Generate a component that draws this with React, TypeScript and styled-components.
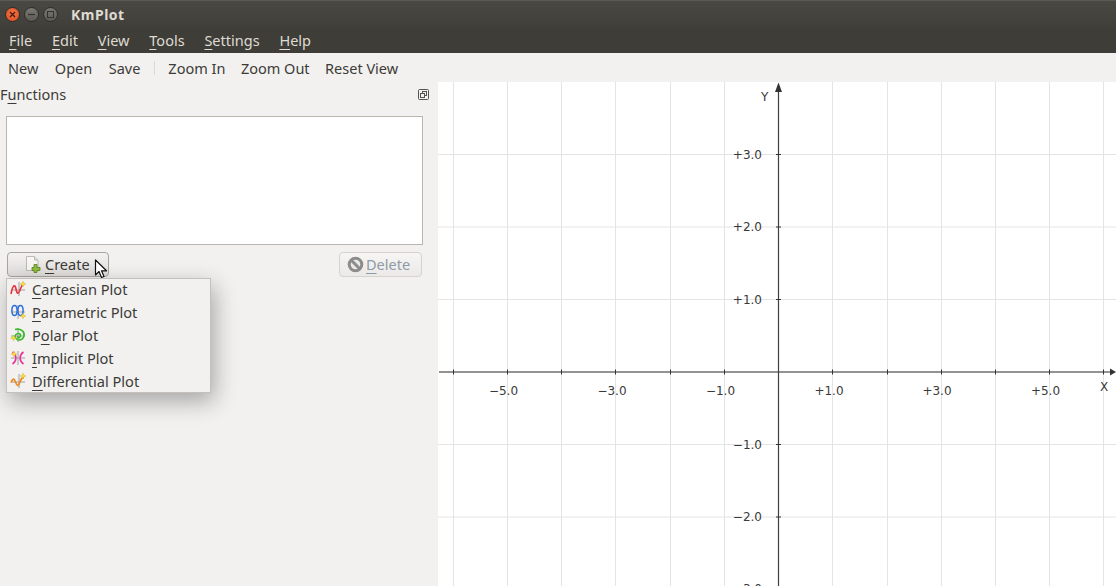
import React from "react";
import styled, { createGlobalStyle } from "styled-components";

const Global = createGlobalStyle`
  html, body { margin: 0; padding: 0; width: 1116px; height: 586px; overflow: hidden; background: #f2f1f0; }
  body { font-family: "Noto Sans", "Open Sans", sans-serif; font-size: 14px; color: #3c3b37; }
`;

const Window = styled.div`
  position: relative;
  width: 1116px;
  height: 586px;
  display: flex;
  flex-direction: column;
  overflow: hidden;
`;

const TitleBar = styled.div`
  height: 28px;
  flex: none;
  display: flex;
  align-items: center;
  padding-left: 5px;
  box-sizing: border-box;
  background: linear-gradient(#4a4842, #403f3a);
  border-top: 1px solid #5c5a54;
`;

const WinButtons = styled.div`
  display: flex;
  gap: 4px;
  margin-right: 13px;
`;

const WinButton = styled.div<{ $close?: boolean }>`
  width: 15px;
  height: 15px;
  box-sizing: border-box;
  border-radius: 50%;
  display: flex;
  align-items: center;
  justify-content: center;
  border: 0.5px solid #2e2d29;
  background: ${(p) =>
    p.$close
      ? "radial-gradient(circle at 50% 40%, #f0764a, #df4a1c)"
      : "linear-gradient(#7a7872, #5c5a55)"};
`;

const Title = styled.div`
  font-size: 14px;
  font-weight: 700;
  color: #dfdbd2;
  letter-spacing: 0.5px;
`;

const MenuBar = styled.div`
  height: 25px;
  flex: none;
  display: flex;
  align-items: center;
  padding: 0 0 2px 9px;
  box-sizing: border-box;
  gap: 19.8px;
  background: #3e3d38;
  color: #dfdbd2;
  font-size: 14.5px;
`;

const Mn = styled.span`
  text-decoration: underline;
  text-decoration-thickness: 1px;
  text-underline-offset: 3px;
`;

const ToolBar = styled.div`
  height: 29px;
  flex: none;
  display: flex;
  align-items: center;
  padding-left: 8px;
  font-size: 14.5px;
  background: #f2f1f0;
`;

const ToolGroup = styled.div<{ $gap: number }>`
  display: flex;
  gap: ${(p) => p.$gap}px;
`;

const ToolSep = styled.div`
  width: 1px;
  height: 14px;
  background: #dcdad6;
  margin: 0 13.5px;
`;

const Main = styled.div`
  flex: 1;
  display: flex;
  min-height: 0;
`;

const SidePanel = styled.div`
  width: 438px;
  flex: none;
  display: flex;
  flex-direction: column;
  box-sizing: border-box;
  padding: 0 15px 0 6px;
`;

const DockHeader = styled.div`
  height: 34px;
  flex: none;
  margin-left: -6px;
  margin-right: -6px;
  display: flex;
  align-items: flex-start;
  justify-content: space-between;
  padding-top: 2px;
  box-sizing: border-box;
  font-size: 14.5px;
  line-height: 20px;
`;

const FloatIcon = styled.svg`
  margin-top: 5px;
`;

const ListBox = styled.div`
  height: 129px;
  width: 417px;
  flex: none;
  box-sizing: border-box;
  background: #fff;
  border: 1px solid #b9b6b0;
`;

const ButtonRow = styled.div`
  width: 417px;
  display: flex;
  justify-content: space-between;
  margin-top: 7px;
  padding-left: 1px;
  padding-right: 1px;
  box-sizing: border-box;
`;

const PushButton = styled.div<{ $disabled?: boolean; $w: number; $pad: number }>`
  width: ${(p) => p.$w}px;
  height: 25px;
  box-sizing: border-box;
  display: flex;
  align-items: center;
  gap: 2px;
  padding-left: ${(p) => p.$pad}px;
  padding-bottom: 1px;
  border-radius: 4px;
  font-size: 14.5px;
  border: 1px solid ${(p) => (p.$disabled ? "#d6d3ce" : "#a8a59f")};
  color: ${(p) => (p.$disabled ? "#8e9aa6" : "#3c3b37")};
  background: ${(p) =>
    p.$disabled ? "linear-gradient(#f6f5f4, #ebeae8)" : "linear-gradient(#f3f2f1, #dfddda)"};
`;

const Menu = styled.div`
  position: absolute;
  left: 6px;
  top: 278px;
  width: 205px;
  height: 115px;
  box-sizing: border-box;
  background: #f2f1f0;
  border: 1px solid #c4c1bc;
  box-shadow: 3px 8px 22px rgba(0, 0, 0, 0.32);
  display: flex;
  flex-direction: column;
`;

const MenuItem = styled.div`
  height: 23px;
  box-sizing: border-box;
  padding: 0 0 3px 3px;
  flex: none;
  display: flex;
  align-items: center;
  gap: 6px;
  font-size: 14.6px;
  color: #3c3b37;
`;

const Cursor = styled.svg`
  position: absolute;
  left: 94px;
  top: 259px;
`;

const PlotArea = styled.svg`
  flex: 1;
  height: 504px;
  display: block;
  background: #fff;
`;

const AxisLabel = styled.text`
  font-family: "DejaVu Sans", sans-serif;
  font-size: 12px;
  fill: #3a3a3a;
`;

const Star = ({ x, y }: { x: number; y: number }) => (
  <path
    d={`M${x} ${y - 3}L${x + 0.9} ${y - 0.9}L${x + 3} ${y}L${x + 0.9} ${y + 0.9}L${x} ${y + 3}L${x - 0.9} ${y + 0.9}L${x - 3} ${y}L${x - 0.9} ${y - 0.9}Z`}
    fill="#f9dc3c"
    stroke="#c4a02c"
    strokeWidth="0.3"
  />
);

const Guides = ({ v = [], h = [] }: { v?: number[]; h?: number[] }) => (
  <g stroke="#8e8e8e" strokeWidth="1" opacity="0.8">
    {v.map((x) => (
      <path key={`v${x}`} d={`M${x} 1V15`} />
    ))}
    {h.map((y) => (
      <path key={`h${y}`} d={`M1 ${y}H15`} />
    ))}
  </g>
);

const CartesianIcon = () => (
  <svg width="16" height="16" viewBox="0 0 16 16">
    <Guides v={[9]} h={[9]} />
    <path d="M1 13C3 3 5 3 6 8S8 14 10 9S12 4 13 3" fill="none" stroke="#e8323c" strokeWidth="1.6" />
    <Star x={13} y={3} />
  </svg>
);
const ParametricIcon = () => (
  <svg width="16" height="16" viewBox="0 0 16 16">
    <Guides v={[8]} h={[8]} />
    <ellipse cx="4.5" cy="6.5" rx="2.6" ry="5" fill="none" stroke="#2a6fe0" strokeWidth="1.5" />
    <ellipse cx="10.5" cy="6.5" rx="2.6" ry="5" fill="none" stroke="#2a6fe0" strokeWidth="1.5" />
    <Star x={13} y={12} />
  </svg>
);
const PolarIcon = () => (
  <svg width="16" height="16" viewBox="0 0 16 16">
    <Guides v={[8]} h={[9]} />
    <path d="M5 2.5C11 1 15 5 14 9S9 14 6.5 12S5 7 8 6.5S11 9 9.5 10.5S7.5 10 8 9" fill="none" stroke="#35bb28" strokeWidth="1.6" />
    <Star x={3.5} y={11} />
  </svg>
);
const ImplicitIcon = () => (
  <svg width="16" height="16" viewBox="0 0 16 16">
    <Guides v={[8]} h={[8]} />
    <path d="M2.5 2C7 5 7 11 2.5 14M13.5 2C9 5 9 11 13.5 14" fill="none" stroke="#e8309c" strokeWidth="1.6" />
    <Star x={4} y={4} />
  </svg>
);
const DifferentialIcon = () => (
  <svg width="16" height="16" viewBox="0 0 16 16">
    <Guides v={[9]} h={[9]} />
    <path d="M1 9.5C3 5 4 5 5.5 9S8 14 10 9S12 5 14 5" fill="none" stroke="#ec8a1c" strokeWidth="1.7" />
    <Star x={13} y={3} />
  </svg>
);

const NewDocIcon = () => (
  <svg width="18" height="18" viewBox="0 0 18 18">
    <path d="M1.5 1.5H9.5L13 5V15.5H1.5Z" fill="#f7f6f4" stroke="#bdbab4" />
    <path d="M9.5 1.5V5H13" fill="#e4e2de" stroke="#bdbab4" />
    <path d="M9 9.5H12V12.5H15V15.5H12V17.5H9V15.5H7V12.5H9Z" fill="#8fbf3f" stroke="#5c7f22" strokeWidth="0.8" />
  </svg>
);

const DeleteIcon = () => (
  <svg width="17" height="17" viewBox="0 0 17 17">
    <circle cx="8.5" cy="8.5" r="6.3" fill="#e9e8e6" stroke="#8c8c8a" strokeWidth="3" />
    <path d="M4 4L13 13" stroke="#8c8c8a" strokeWidth="3" />
  </svg>
);

const gridX = [453.5, 507.5, 561.5, 615.5, 670.5, 724.5, 832.5, 887.5, 941.5, 995.5, 1049.5, 1103.5];
const gridY = [154.5, 227, 299.5, 444.5, 517];
const xLabels: [string, number][] = [
  ["−5.0", 503.5], ["−3.0", 612], ["−1.0", 720.5], ["+1.0", 829], ["+3.0", 937], ["+5.0", 1045.5],
];
const yLabels: [string, number][] = [
  ["+3.0", 159], ["+2.0", 231], ["+1.0", 304], ["−1.0", 449], ["−2.0", 521], ["−3.0", 593],
];

const menuBar: [string, string][] = [
  ["F", "ile"], ["E", "dit"], ["V", "iew"], ["T", "ools"], ["S", "ettings"], ["H", "elp"],
];

export default function App() {
  return (
    <Window>
      <Global />
      <TitleBar>
        <WinButtons>
          <WinButton $close>
            <svg width="7" height="7" viewBox="0 0 7 7"><path d="M1 1L6 6M6 1L1 6" stroke="#4a1a08" strokeWidth="1.3" /></svg>
          </WinButton>
          <WinButton>
            <svg width="7" height="7" viewBox="0 0 7 7"><path d="M0 3.5H7" stroke="#33322e" strokeWidth="1.2" /></svg>
          </WinButton>
          <WinButton>
            <svg width="7" height="7" viewBox="0 0 7 7"><rect x="0.5" y="0.5" width="6" height="6" fill="none" stroke="#33322e" /></svg>
          </WinButton>
        </WinButtons>
        <Title>KmPlot</Title>
      </TitleBar>
      <MenuBar>
        {menuBar.map(([a, b]) => (
          <span key={a}><Mn>{a}</Mn>{b}</span>
        ))}
      </MenuBar>
      <ToolBar>
        <ToolGroup $gap={16.5}><span>New</span><span>Open</span><span>Save</span></ToolGroup>
        <ToolSep />
        <ToolGroup $gap={15.5}><span>Zoom In</span><span>Zoom Out</span><span>Reset View</span></ToolGroup>
      </ToolBar>
      <Main>
        <SidePanel>
          <DockHeader>
            <span>F<Mn>u</Mn>nctions</span>
            <FloatIcon width="11" height="11" viewBox="0 0 11 11">
              <rect x="0.5" y="0.5" width="10" height="10" rx="1" fill="none" stroke="#55534e" />
              <rect x="4.5" y="2.5" width="4" height="4" fill="none" stroke="#55534e" />
              <rect x="2.5" y="4.5" width="4" height="4" fill="#f2f1f0" stroke="#55534e" />
            </FloatIcon>
          </DockHeader>
          <ListBox />
          <ButtonRow>
            <PushButton $w={102} $pad={17}>
              <NewDocIcon />
              <span><Mn>C</Mn>reate</span>
            </PushButton>
            <PushButton $disabled $w={83} $pad={7}>
              <DeleteIcon />
              <span><Mn>D</Mn>elete</span>
            </PushButton>
          </ButtonRow>
        </SidePanel>
        <PlotArea viewBox="438 82 678 504">
          <g stroke="#e4e4e4" strokeWidth="1">
            {gridX.map((x) => <line key={x} x1={x} x2={x} y1="82" y2="586" />)}
            {gridY.map((y) => <line key={y} x1="438" x2="1116" y1={y} y2={y} />)}
          </g>
          <line x1="439" x2="1112" y1="372" y2="372" stroke="#6f6f6f" strokeWidth="1.4" />
          <line x1="778.5" x2="778.5" y1="88" y2="586" stroke="#3f3f3f" strokeWidth="1.2" />
          <path d="M778.5 82.5L782 92H775Z" fill="#333" />
          <path d="M1116 372L1110 368.5V375.5Z" fill="#333" />
          <g stroke="#333" strokeWidth="1">
            {gridX.map((x) => <line key={x} x1={x} x2={x} y1="369.5" y2="374.5" />)}
            {gridY.map((y) => <line key={y} x1="776" x2="781" y1={y} y2={y} />)}
          </g>
          {xLabels.map(([t, x]) => <AxisLabel key={t} x={x} y={395} textAnchor="middle">{t}</AxisLabel>)}
          {yLabels.map(([t, y]) => <AxisLabel key={t} x={762} y={y} textAnchor="end">{t}</AxisLabel>)}
          <AxisLabel x={761} y={101}>Y</AxisLabel>
          <AxisLabel x={1100} y={391}>X</AxisLabel>
        </PlotArea>
      </Main>
      <Menu>
        <MenuItem><CartesianIcon /><span><Mn>C</Mn>artesian Plot</span></MenuItem>
        <MenuItem><ParametricIcon /><span><Mn>P</Mn>arametric Plot</span></MenuItem>
        <MenuItem><PolarIcon /><span>P<Mn>o</Mn>lar Plot</span></MenuItem>
        <MenuItem><ImplicitIcon /><span><Mn>I</Mn>mplicit Plot</span></MenuItem>
        <MenuItem><DifferentialIcon /><span><Mn>D</Mn>ifferential Plot</span></MenuItem>
      </Menu>
      <Cursor width="14" height="20" viewBox="0 0 14 20">
        <path d="M1.5 1V16L5 12.5L7.5 18.5L10 17.5L7.5 11.8H12.5Z" fill="#fff" stroke="#111" strokeWidth="1.2" strokeLinejoin="round" />
      </Cursor>
    </Window>
  );
}
